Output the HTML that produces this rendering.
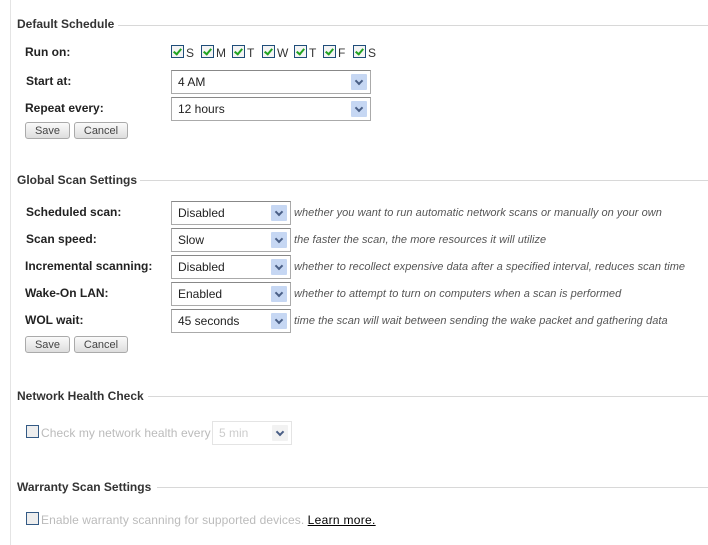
<!DOCTYPE html>
<html><head><style>
body{margin:0;width:708px;height:545px;background:#fff;font-family:"Liberation Sans",Arial,sans-serif;position:relative;overflow:hidden}
.a{position:absolute;white-space:nowrap}
.vl{position:absolute;left:10px;top:0;width:1px;height:545px;background:#e4e4e4}
.h{font-size:12px;font-weight:bold;color:#333}
.hl{position:absolute;height:1px;background:#d8d8d8;right:0}
.l{font-size:12px;font-weight:bold;color:#222}
.sel{position:absolute;border:1px solid #aaa;border-top-color:#888;background:#fff;font-size:12px;color:#222;box-sizing:border-box;height:24px;line-height:22px;padding-left:6px}
.sel i{position:absolute;right:3px;top:3px;width:16px;height:16px;background:#c6d7f3;border-radius:1px}
.sel i:after{content:"";position:absolute;left:5px;top:4px;width:4px;height:4px;border-right:2px solid #4a5f86;border-bottom:2px solid #4a5f86;transform:rotate(45deg)}
.btn{position:absolute;height:17px;border:1px solid #aaa;border-radius:3px;background:linear-gradient(#fafafa,#ddd);font-size:11px;color:#444;text-align:center;line-height:16px;box-sizing:border-box}
.cb{position:absolute;width:13px;height:13px;border:1px solid #1f4d7a;box-sizing:border-box;background:#f4f4f4}
.cb:after{content:"";position:absolute;left:3px;top:1px;width:3px;height:6px;border-right:2px solid #21a321;border-bottom:2px solid #21a321;transform:rotate(40deg)}
.cb.n:after{display:none}
.d{font-size:12px;color:#333}
.hint{font-size:11px;font-style:italic;color:#555;letter-spacing:0.05px}
.dis{color:#bbb;font-size:12px;letter-spacing:0.08px}
</style></head><body>
<div class="vl"></div>
<div class="a h" style="left:17px;top:17px">Default Schedule</div><div class="hl" style="left:118px;top:25px"></div>
<div class="a l" style="left:25px;top:45px">Run on:</div>
<div class="cb" style="left:171px;top:45px"></div><div class="a d" style="left:186px;top:46px">S</div>
<div class="cb" style="left:201px;top:45px"></div><div class="a d" style="left:216px;top:46px">M</div>
<div class="cb" style="left:232px;top:45px"></div><div class="a d" style="left:247px;top:46px">T</div>
<div class="cb" style="left:262px;top:45px"></div><div class="a d" style="left:277px;top:46px">W</div>
<div class="cb" style="left:294px;top:45px"></div><div class="a d" style="left:309px;top:46px">T</div>
<div class="cb" style="left:323px;top:45px"></div><div class="a d" style="left:338px;top:46px">F</div>
<div class="cb" style="left:353px;top:45px"></div><div class="a d" style="left:368px;top:46px">S</div>
<div class="a l" style="left:26px;top:74px">Start at:</div>
<div class="sel" style="left:171px;top:70px;width:200px">4 AM<i></i></div>
<div class="a l" style="left:25px;top:101px">Repeat every:</div>
<div class="sel" style="left:171px;top:97px;width:200px">12 hours<i></i></div>
<div class="btn" style="left:25px;top:122px;width:45px">Save</div>
<div class="btn" style="left:74px;top:122px;width:54px">Cancel</div>

<div class="a h" style="left:17px;top:173px">Global Scan Settings</div><div class="hl" style="left:140px;top:180px"></div>
<div class="a l" style="left:26px;top:205px">Scheduled scan:</div>
<div class="sel" style="left:171px;top:201px;width:120px">Disabled<i></i></div>
<div class="a hint" style="left:294px;top:207px">whether you want to run automatic network scans or manually on your own</div>
<div class="a l" style="left:26px;top:232px">Scan speed:</div>
<div class="sel" style="left:171px;top:228px;width:120px">Slow<i></i></div>
<div class="a hint" style="left:294px;top:234px">the faster the scan, the more resources it will utilize</div>
<div class="a l" style="left:25px;top:259px">Incremental scanning:</div>
<div class="sel" style="left:171px;top:255px;width:120px">Disabled<i></i></div>
<div class="a hint" style="left:294px;top:261px">whether to recollect expensive data after a specified interval, reduces scan time</div>
<div class="a l" style="left:25px;top:286px">Wake-On LAN:</div>
<div class="sel" style="left:171px;top:282px;width:120px">Enabled<i></i></div>
<div class="a hint" style="left:294px;top:288px">whether to attempt to turn on computers when a scan is performed</div>
<div class="a l" style="left:25px;top:313px">WOL wait:</div>
<div class="sel" style="left:171px;top:309px;width:120px">45 seconds<i></i></div>
<div class="a hint" style="left:294px;top:315px">time the scan will wait between sending the wake packet and gathering data</div>
<div class="btn" style="left:25px;top:336px;width:45px">Save</div>
<div class="btn" style="left:74px;top:336px;width:54px">Cancel</div>

<div class="a h" style="left:17px;top:389px">Network Health Check</div><div class="hl" style="left:148px;top:396px"></div>
<div class="cb n" style="left:26px;top:425px;border-color:#345a85;background:#eee"></div>
<div class="a dis" style="left:41px;top:426px">Check my network health every</div>
<div class="sel" style="left:212px;top:421px;width:80px;border-color:#e4e4e4;color:#ccc">5 min<i style="background:#f2f2f2"></i></div>

<div class="a h" style="left:17px;top:480px">Warranty Scan Settings</div><div class="hl" style="left:157px;top:487px"></div>
<div class="cb n" style="left:26px;top:512px;border-color:#345a85;background:#eee"></div>
<div class="a dis" style="left:41px;top:513px">Enable warranty scanning for supported devices. <span style="color:#000;text-decoration:underline;letter-spacing:0.3px">Learn more.</span></div>
</body></html>
